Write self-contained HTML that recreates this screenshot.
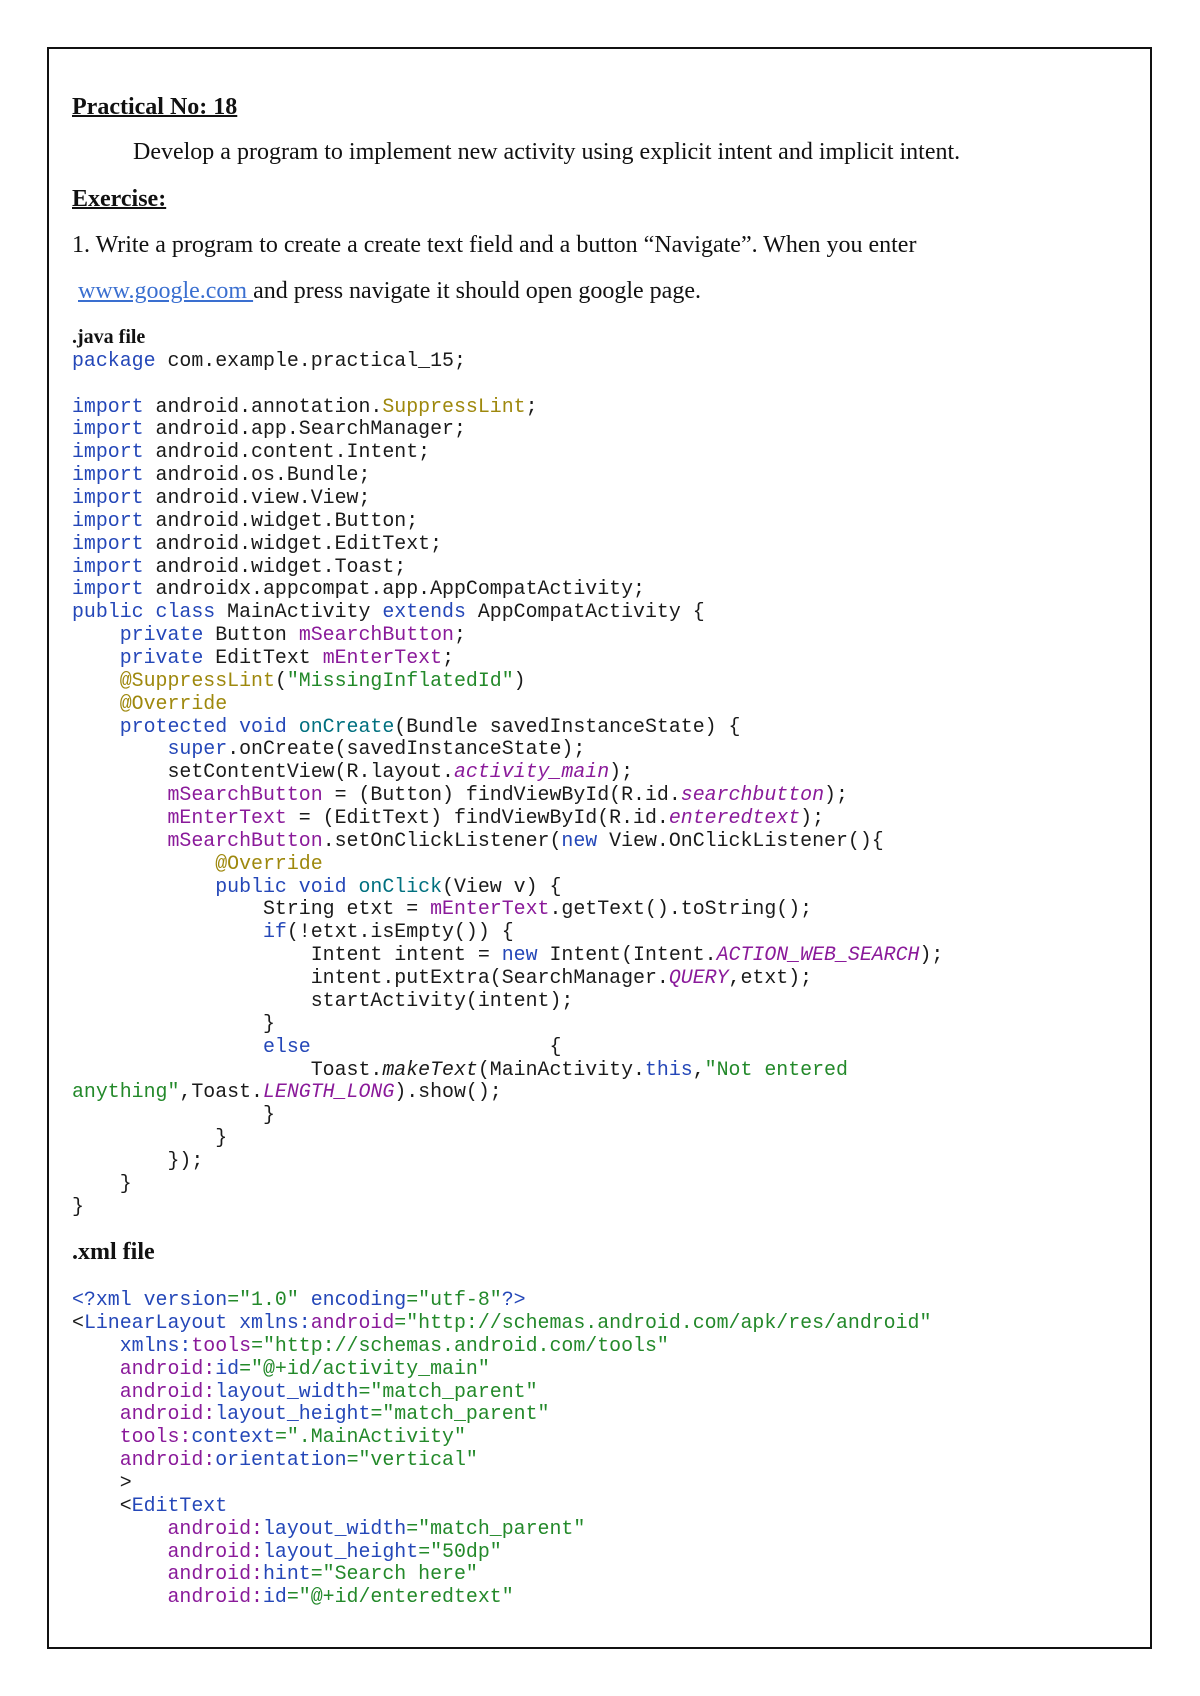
<!DOCTYPE html>
<html><head><meta charset="utf-8">
<style>
html,body{margin:0;padding:0;background:#fff;}
body{width:1200px;height:1696px;position:relative;overflow:hidden;}
.frame{position:absolute;left:47px;top:47px;width:1101px;height:1598px;border:2px solid #111;}
.t{position:absolute;left:72px;font-family:"Liberation Serif",serif;color:#111;white-space:nowrap;line-height:1;}
.b{font-weight:bold;text-decoration:underline;text-decoration-thickness:2px;}
pre{position:absolute;left:72px;top:326px;margin:0;font-family:"Liberation Mono",monospace;font-size:19.9px;line-height:22.86px;color:#1a1a1a;}
.k{color:#2447b8}.p{color:#8a1a9a}.g{color:#23892a}.a{color:#9e880d}.m{color:#00707f}.i{color:#8a1a9a;font-style:italic}
.ser{font-family:"Liberation Serif",serif;font-weight:bold;color:#111}
</style></head><body>
<div class="frame"></div>
<div class="t b" style="top:95px;font-size:24px;">Practical No: 18</div>
<div class="t" style="top:140px;left:133px;font-size:24px;">Develop a program to implement new activity using explicit intent and implicit intent.</div>
<div class="t b" style="top:187px;font-size:24px;">Exercise:</div>
<div class="t" style="top:233px;font-size:24px;">1. Write a program to create a create text field and a button “Navigate”. When you enter</div>
<div class="t" style="top:279px;left:78px;font-size:24px;"><span style="color:#3a6fd0;text-decoration:underline;">www.google.com </span>and press navigate it should open google page.</div>
<pre><span class="ser" style="font-size:20px;">.java file</span>
<span class="k">package</span> com.example.practical_15;

<span class="k">import</span> android.annotation.<span class="a">SuppressLint</span>;
<span class="k">import</span> android.app.SearchManager;
<span class="k">import</span> android.content.Intent;
<span class="k">import</span> android.os.Bundle;
<span class="k">import</span> android.view.View;
<span class="k">import</span> android.widget.Button;
<span class="k">import</span> android.widget.EditText;
<span class="k">import</span> android.widget.Toast;
<span class="k">import</span> androidx.appcompat.app.AppCompatActivity;
<span class="k">public class</span> MainActivity <span class="k">extends</span> AppCompatActivity {
    <span class="k">private</span> Button <span class="p">mSearchButton</span>;
    <span class="k">private</span> EditText <span class="p">mEnterText</span>;
    <span class="a">@SuppressLint</span>(<span class="g">"MissingInflatedId"</span>)
    <span class="a">@Override</span>
    <span class="k">protected void</span> <span class="m">onCreate</span>(Bundle savedInstanceState) {
        <span class="k">super</span>.onCreate(savedInstanceState);
        setContentView(R.layout.<span class="i">activity_main</span>);
        <span class="p">mSearchButton</span> = (Button) findViewById(R.id.<span class="i">searchbutton</span>);
        <span class="p">mEnterText</span> = (EditText) findViewById(R.id.<span class="i">enteredtext</span>);
        <span class="p">mSearchButton</span>.setOnClickListener(<span class="k">new</span> View.OnClickListener(){
            <span class="a">@Override</span>
            <span class="k">public void</span> <span class="m">onClick</span>(View v) {
                String etxt = <span class="p">mEnterText</span>.getText().toString();
                <span class="k">if</span>(!etxt.isEmpty()) {
                    Intent intent = <span class="k">new</span> Intent(Intent.<span class="i">ACTION_WEB_SEARCH</span>);
                    intent.putExtra(SearchManager.<span class="i">QUERY</span>,etxt);
                    startActivity(intent);
                }
                <span class="k">else</span>                    {
                    Toast.<span style="font-style:italic">makeText</span>(MainActivity.<span class="k">this</span>,<span class="g">"Not entered</span>
<span class="g">anything"</span>,Toast.<span class="i">LENGTH_LONG</span>).show();
                }
            }
        });
    }
}

<span class="ser" style="font-size:24px;">.xml file</span>

<span class="k">&lt;?xml version</span><span class="g">="1.0"</span> <span class="k">encoding</span><span class="g">="utf-8"</span><span class="k">?&gt;</span>
&lt;<span class="k">LinearLayout xmlns:</span><span class="p">android</span><span class="g">="http://schemas.android.com/apk/res/android"</span>
    <span class="k">xmlns:</span><span class="p">tools</span><span class="g">="http://schemas.android.com/tools"</span>
    <span class="p">android:</span><span class="k">id</span><span class="g">="@+id/activity_main"</span>
    <span class="p">android:</span><span class="k">layout_width</span><span class="g">="match_parent"</span>
    <span class="p">android:</span><span class="k">layout_height</span><span class="g">="match_parent"</span>
    <span class="p">tools:</span><span class="k">context</span><span class="g">=".MainActivity"</span>
    <span class="p">android:</span><span class="k">orientation</span><span class="g">="vertical"</span>
    &gt;
    &lt;<span class="k">EditText</span>
        <span class="p">android:</span><span class="k">layout_width</span><span class="g">="match_parent"</span>
        <span class="p">android:</span><span class="k">layout_height</span><span class="g">="50dp"</span>
        <span class="p">android:</span><span class="k">hint</span><span class="g">="Search here"</span>
        <span class="p">android:</span><span class="k">id</span><span class="g">="@+id/enteredtext"</span></pre>
</body></html>
